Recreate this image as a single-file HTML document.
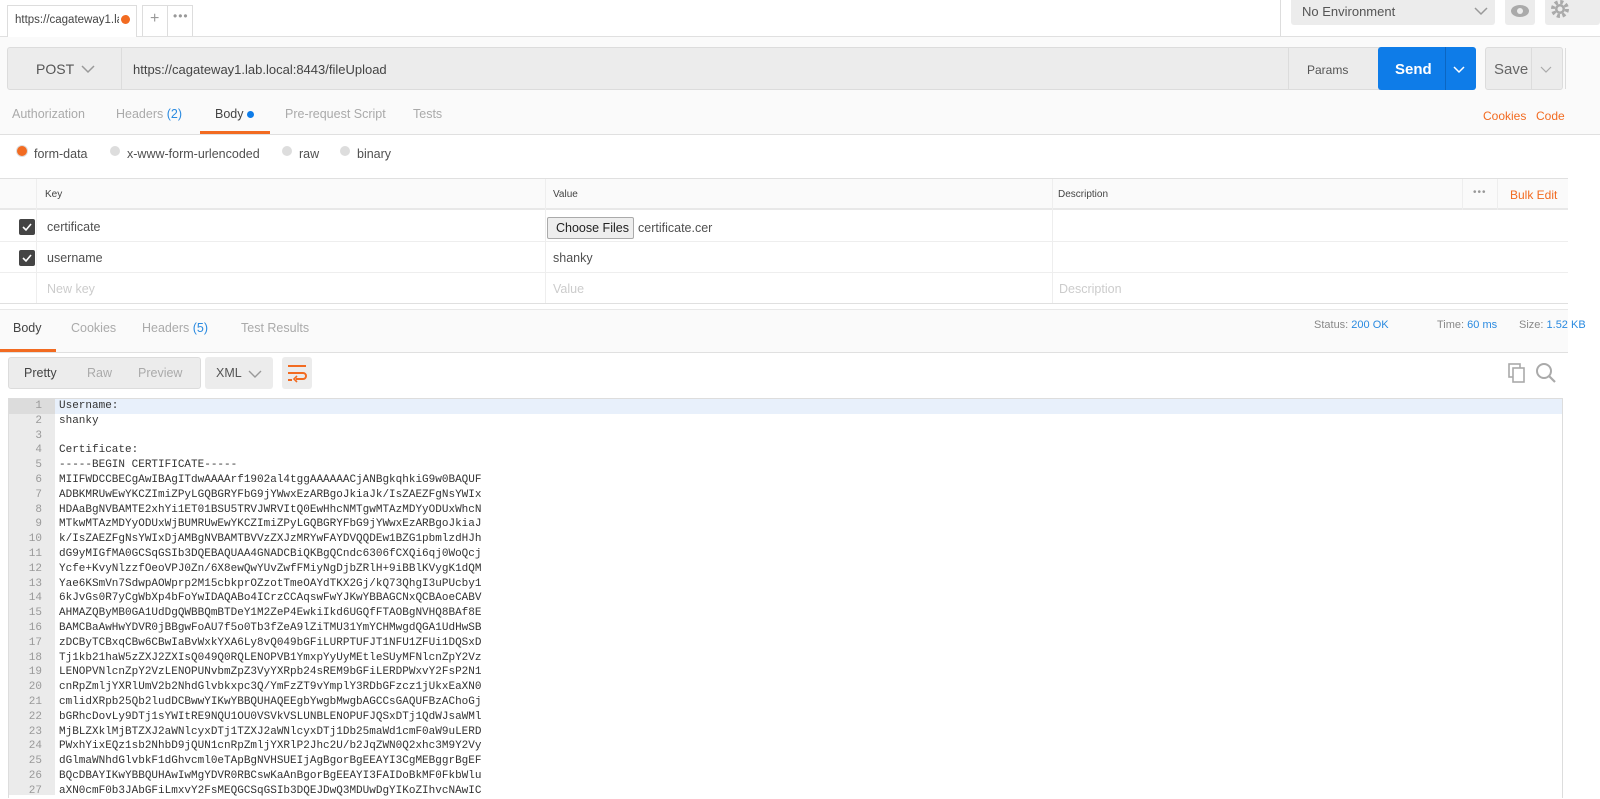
<!DOCTYPE html>
<html><head><style>
*{box-sizing:border-box;margin:0;padding:0}
body{width:1600px;height:795px;overflow:hidden;background:#fff;font-family:"Liberation Sans",sans-serif;font-size:12px;color:#505050;position:relative}
.a{position:absolute}
.gray{background:#ececec;border:1px solid #dcdcdc;border-radius:3px}
.code{font-family:"Liberation Mono",monospace;font-size:11px;line-height:14.8px;color:#333}
</style></head><body>
<!-- top bar -->
<div class="a" style="left:0;top:0;width:1600px;height:37px;background:#fff;border-bottom:1px solid #e0e0e0"></div>
<div class="a" style="left:7px;top:5px;width:130px;height:33px;border:1px solid #ddd;border-bottom:none;background:#fff"></div>
<div class="a" style="left:15px;top:14px;width:104px;overflow:hidden;white-space:nowrap;font-size:11.5px;color:#444">https://cagateway1.lab.local</div>
<div class="a" style="left:121px;top:15px;width:9px;height:9px;border-radius:50%;background:#f26b21"></div>
<div class="a" style="left:142px;top:5px;width:51px;height:31px;border:1px solid #ddd;border-bottom:none"></div>
<div class="a" style="left:167px;top:5px;width:1px;height:31px;background:#ddd"></div>
<div class="a" style="left:150px;top:10px;font-size:16px;color:#999">+</div>
<div class="a" style="left:173px;top:9px;font-size:12px;color:#999;letter-spacing:1px">•••</div>
<div class="a" style="left:1280px;top:0;width:1px;height:36px;background:#ddd"></div>
<div class="a" style="left:1291px;top:0;width:204px;height:25px;background:#ececec;border-radius:0 0 3px 3px;padding:4px 0 0 11px;font-size:13px;color:#555">No Environment<svg class="a" style="left:183px;top:7px" width="14" height="9"><path d="M1 1l6 6 6-6" stroke="#999" fill="none" stroke-width="1.5"/></svg></div>
<div class="a" style="left:1505px;top:0;width:30px;height:25px;background:#ececec;border-radius:0 0 3px 3px"><svg class="a" style="left:5px;top:4px" width="20" height="14"><ellipse cx="10" cy="7" rx="9" ry="6" fill="#aaa"/><circle cx="10" cy="7" r="3" fill="#ececec"/></svg></div>
<div class="a" style="left:1545px;top:0;width:55px;height:25px;background:#ececec;border-radius:0 0 3px 3px"><svg class="a" style="left:5px;top:-2px" width="20" height="22"><circle cx="10" cy="11" r="7" fill="none" stroke="#aaa" stroke-width="4" stroke-dasharray="3 2.5"/><circle cx="10" cy="11" r="5" fill="#aaa"/><circle cx="10" cy="11" r="2.5" fill="#ececec"/></svg></div>
<!-- request area -->
<div class="a" style="left:0;top:37px;width:1600px;height:98px;background:#fafafa;border-bottom:1px solid #e0e0e0"></div>
<div class="a gray" style="left:7px;top:47px;width:1389px;height:43px"></div>
<div class="a" style="left:121px;top:48px;width:1px;height:41px;background:#dcdcdc"></div>
<div class="a" style="left:36px;top:61px;font-size:14px;color:#555">POST</div>
<svg class="a" style="left:81px;top:65px" width="14" height="9"><path d="M1 1l6 6 6-6" stroke="#999" fill="none" stroke-width="1.5"/></svg>
<div class="a" style="left:133px;top:62px;font-size:13px;color:#444">https://cagateway1.lab.local:8443/fileUpload</div>
<div class="a" style="left:1288px;top:48px;width:1px;height:41px;background:#dcdcdc"></div>
<div class="a" style="left:1307px;top:63px;font-size:12px;color:#555">Params</div>
<div class="a" style="left:1378px;top:47px;width:98px;height:43px;background:#0e7ce8;border-radius:3px"></div>
<div class="a" style="left:1445px;top:47px;width:1px;height:43px;background:#0b66c2"></div>
<div class="a" style="left:1395px;top:61px;font-size:15px;font-weight:bold;color:#fff">Send</div>
<svg class="a" style="left:1453px;top:66px" width="12" height="8"><path d="M1 1l5 5 5-5" stroke="#fff" fill="none" stroke-width="1.5"/></svg>
<div class="a gray" style="left:1485px;top:47px;width:78px;height:43px"></div>
<div class="a" style="left:1565px;top:48px;width:1px;height:41px;background:#dcdcdc"></div>
<div class="a" style="left:1531px;top:48px;width:1px;height:41px;background:#dcdcdc"></div>
<div class="a" style="left:1494px;top:61px;font-size:15px;color:#666">Save</div>
<svg class="a" style="left:1540px;top:66px" width="12" height="8"><path d="M1 1l5 5 5-5" stroke="#aaa" fill="none" stroke-width="1.2"/></svg>
<div class="a" style="left:12px;top:107px;font-size:12.5px;color:#aaa">Authorization</div>
<div class="a" style="left:116px;top:107px;font-size:12.5px;color:#aaa">Headers <span style="color:#2a8ae0">(2)</span></div>
<div class="a" style="left:215px;top:107px;font-size:12.5px;color:#444">Body <span style="display:inline-block;width:7px;height:7px;border-radius:50%;background:#0e7ce8"></span></div>
<div class="a" style="left:200px;top:131px;width:70px;height:3px;background:#f26b21"></div>
<div class="a" style="left:285px;top:107px;font-size:12.5px;color:#aaa">Pre-request Script</div>
<div class="a" style="left:413px;top:107px;font-size:12.5px;color:#aaa">Tests</div>
<div class="a" style="left:1483px;top:109px;font-size:12px;color:#f26b21">Cookies</div>
<div class="a" style="left:1536px;top:109px;font-size:12px;color:#f26b21">Code</div>
<!-- radios -->
<div class="a" style="left:17px;top:146px;width:10px;height:10px;border-radius:50%;background:#f26b21;box-shadow:0 0 0 1px #ddd"></div>
<div class="a" style="left:34px;top:147px;font-size:12.5px">form-data</div>
<div class="a" style="left:110px;top:146px;width:10px;height:10px;border-radius:50%;background:#ddd"></div>
<div class="a" style="left:127px;top:147px;font-size:12.5px">x-www-form-urlencoded</div>
<div class="a" style="left:282px;top:146px;width:10px;height:10px;border-radius:50%;background:#ddd"></div>
<div class="a" style="left:299px;top:147px;font-size:12.5px">raw</div>
<div class="a" style="left:340px;top:146px;width:10px;height:10px;border-radius:50%;background:#ddd"></div>
<div class="a" style="left:357px;top:147px;font-size:12.5px">binary</div>
<!-- table -->
<div class="a" style="left:0;top:178px;width:1568px;height:1px;background:#e0e0e0"></div>
<div class="a" style="left:0;top:179px;width:1568px;height:31px;background:#fafafa;border-bottom:2px solid #e8e8e8"></div>
<div class="a" style="left:0;top:241px;width:1568px;height:1px;background:#eee"></div>
<div class="a" style="left:0;top:272px;width:1568px;height:1px;background:#eee"></div>
<div class="a" style="left:0;top:303px;width:1568px;height:1px;background:#e0e0e0"></div>
<div class="a" style="left:36px;top:179px;width:1px;height:124px;background:#eee"></div>
<div class="a" style="left:545px;top:179px;width:1px;height:124px;background:#eee"></div>
<div class="a" style="left:1052px;top:179px;width:1px;height:124px;background:#eee"></div>
<div class="a" style="left:1462px;top:179px;width:1px;height:31px;background:#eee"></div>
<div class="a" style="left:1497px;top:179px;width:1px;height:31px;background:#eee"></div>
<div class="a" style="left:45px;top:189px;font-size:10px;color:#444">Key</div>
<div class="a" style="left:553px;top:189px;font-size:10px;color:#444">Value</div>
<div class="a" style="left:1058px;top:189px;font-size:10px;color:#444">Description</div>
<div class="a" style="left:1473px;top:187px;font-size:10px;color:#999;letter-spacing:1px">•••</div>
<div class="a" style="left:1510px;top:188px;font-size:12px;color:#f26b21">Bulk Edit</div>
<div class="a" style="left:19px;top:219px;width:16px;height:16px;background:#444;border-radius:2px"><svg width="16" height="16"><path d="M4 8l3 3 5-6" stroke="#fff" stroke-width="1.6" fill="none"/></svg></div>
<div class="a" style="left:19px;top:250px;width:16px;height:16px;background:#444;border-radius:2px"><svg width="16" height="16"><path d="M4 8l3 3 5-6" stroke="#fff" stroke-width="1.6" fill="none"/></svg></div>
<div class="a" style="left:47px;top:220px;font-size:12.5px">certificate</div>
<div class="a" style="left:47px;top:251px;font-size:12.5px">username</div>
<div class="a" style="left:47px;top:282px;font-size:12.5px;color:#ccc">New key</div>
<div class="a" style="left:547px;top:217px;width:87px;height:22px;border:1px solid #aaa;background:#eee;border-radius:2px;font-size:12.5px;color:#222;padding:3px 0 0 8px">Choose Files</div>
<div class="a" style="left:638px;top:221px;font-size:12.5px">certificate.cer</div>
<div class="a" style="left:553px;top:251px;font-size:12.5px">shanky</div>
<div class="a" style="left:553px;top:282px;font-size:12.5px;color:#ccc">Value</div>
<div class="a" style="left:1059px;top:282px;font-size:12.5px;color:#ccc">Description</div>
<!-- response -->
<div class="a" style="left:0;top:304px;width:1600px;height:5px;background:#fff"></div>
<div class="a" style="left:0;top:309px;width:1568px;height:44px;background:#fafafa;border-top:1px solid #e8e8e8;border-bottom:1px solid #e0e0e0"></div>
<div class="a" style="left:13px;top:321px;font-size:12.5px;color:#444">Body</div>
<div class="a" style="left:0;top:349px;width:56px;height:3px;background:#f26b21"></div>
<div class="a" style="left:71px;top:321px;font-size:12.5px;color:#aaa">Cookies</div>
<div class="a" style="left:142px;top:321px;font-size:12.5px;color:#aaa">Headers <span style="color:#2a8ae0">(5)</span></div>
<div class="a" style="left:241px;top:321px;font-size:12.5px;color:#aaa">Test Results</div>
<div class="a" style="left:1314px;top:319px;font-size:11px;color:#888">Status: <span style="color:#2a8ae0">200 OK</span></div>
<div class="a" style="left:1437px;top:319px;font-size:11px;color:#888">Time: <span style="color:#2a8ae0">60 ms</span></div>
<div class="a" style="left:1519px;top:319px;font-size:11px;color:#888">Size: <span style="color:#2a8ae0">1.52 KB</span></div>
<div class="a gray" style="left:8px;top:357px;width:193px;height:32px"></div>
<div class="a" style="left:24px;top:366px;font-size:12.5px;color:#444">Pretty</div>
<div class="a" style="left:87px;top:366px;font-size:12.5px;color:#aaa">Raw</div>
<div class="a" style="left:138px;top:366px;font-size:12.5px;color:#aaa">Preview</div>
<div class="a" style="left:205px;top:357px;width:68px;height:32px;background:#ececec;border-radius:3px"></div>
<div class="a" style="left:216px;top:366px;font-size:12.5px;color:#555">XML</div>
<svg class="a" style="left:248px;top:370px" width="14" height="8"><path d="M1 1l6 6 6-6" stroke="#999" fill="none" stroke-width="1.4"/></svg>
<div class="a" style="left:282px;top:357px;width:30px;height:32px;background:#ececec;border-radius:3px"><svg width="30" height="32"><path d="M6 9h18M6 16h15a3 3 0 0 1 0 6h-7M6 23h4" stroke="#f26b21" stroke-width="2" fill="none"/><path d="M15 19l-3 3 3 3" stroke="#f26b21" stroke-width="1.6" fill="none"/></svg></div>
<svg class="a" style="left:1507px;top:362px" width="20" height="22"><rect x="2" y="2" width="11" height="13" fill="none" stroke="#aaa" stroke-width="1.6"/><rect x="6" y="6" width="11" height="14" fill="#fff" stroke="#aaa" stroke-width="1.6"/></svg>
<svg class="a" style="left:1535px;top:362px" width="22" height="22"><circle cx="9" cy="9" r="7" fill="none" stroke="#aaa" stroke-width="2"/><path d="M14 14l6 6" stroke="#aaa" stroke-width="2.2"/></svg>
<!-- code -->
<div class="a" style="left:8px;top:398px;width:1555px;height:400px;border:1px solid #ddd;border-bottom:none"></div>
<div class="a" style="left:9px;top:399px;width:46px;height:396px;background:#ebebeb"></div>
<div class="a" style="left:55px;top:399px;width:1507px;height:15px;background:#e8f0fb"></div>
<div class="a" style="left:9px;top:399px;width:46px;height:15px;background:#dcdcdc"></div>
<div class="a code" style="left:9px;top:399px;width:33px;text-align:right;color:#999">1<br>2<br>3<br>4<br>5<br>6<br>7<br>8<br>9<br>10<br>11<br>12<br>13<br>14<br>15<br>16<br>17<br>18<br>19<br>20<br>21<br>22<br>23<br>24<br>25<br>26<br>27</div>
<div class="a code" style="left:59px;top:399px;white-space:pre">Username:
shanky

Certificate:
-----BEGIN CERTIFICATE-----
MIIFWDCCBECgAwIBAgITdwAAAArf1902al4tggAAAAAACjANBgkqhkiG9w0BAQUF
ADBKMRUwEwYKCZImiZPyLGQBGRYFbG9jYWwxEzARBgoJkiaJk/IsZAEZFgNsYWIx
HDAaBgNVBAMTE2xhYi1ET01BSU5TRVJWRVItQ0EwHhcNMTgwMTAzMDYyODUxWhcN
MTkwMTAzMDYyODUxWjBUMRUwEwYKCZImiZPyLGQBGRYFbG9jYWwxEzARBgoJkiaJ
k/IsZAEZFgNsYWIxDjAMBgNVBAMTBVVzZXJzMRYwFAYDVQQDEw1BZG1pbmlzdHJh
dG9yMIGfMA0GCSqGSIb3DQEBAQUAA4GNADCBiQKBgQCndc6306fCXQi6qj0WoQcj
Ycfe+KvyNlzzfOeoVPJ0Zn/6X8ewQwYUvZwfFMiyNgDjbZRlH+9iBBlKVygK1dQM
Yae6KSmVn7SdwpAOWprp2M15cbkprOZzotTmeOAYdTKX2Gj/kQ73QhgI3uPUcby1
6kJvGs0R7yCgWbXp4bFoYwIDAQABo4ICrzCCAqswFwYJKwYBBAGCNxQCBAoeCABV
AHMAZQByMB0GA1UdDgQWBBQmBTDeY1M2ZeP4EwkiIkd6UGQfFTAOBgNVHQ8BAf8E
BAMCBaAwHwYDVR0jBBgwFoAU7f5o0Tb3fZeA9lZiTMU31YmYCHMwgdQGA1UdHwSB
zDCByTCBxqCBw6CBwIaBvWxkYXA6Ly8vQ049bGFiLURPTUFJT1NFU1ZFUi1DQSxD
Tj1kb21haW5zZXJ2ZXIsQ049Q0RQLENOPVB1YmxpYyUyMEtleSUyMFNlcnZpY2Vz
LENOPVNlcnZpY2VzLENOPUNvbmZpZ3VyYXRpb24sREM9bGFiLERDPWxvY2FsP2N1
cnRpZmljYXRlUmV2b2NhdGlvbkxpc3Q/YmFzZT9vYmplY3RDbGFzcz1jUkxEaXN0
cmlidXRpb25Qb2ludDCBwwYIKwYBBQUHAQEEgbYwgbMwgbAGCCsGAQUFBzAChoGj
bGRhcDovLy9DTj1sYWItRE9NQU1OU0VSVkVSLUNBLENOPUFJQSxDTj1QdWJsaWMl
MjBLZXklMjBTZXJ2aWNlcyxDTj1TZXJ2aWNlcyxDTj1Db25maWd1cmF0aW9uLERD
PWxhYixEQz1sb2NhbD9jQUN1cnRpZmljYXRlP2Jhc2U/b2JqZWN0Q2xhc3M9Y2Vy
dGlmaWNhdGlvbkF1dGhvcml0eTApBgNVHSUEIjAgBgorBgEEAYI3CgMEBggrBgEF
BQcDBAYIKwYBBQUHAwIwMgYDVR0RBCswKaAnBgorBgEEAYI3FAIDoBkMF0FkbWlu
aXN0cmF0b3JAbGFiLmxvY2FsMEQGCSqGSIb3DQEJDwQ3MDUwDgYIKoZIhvcNAwIC</div>
</body></html>
